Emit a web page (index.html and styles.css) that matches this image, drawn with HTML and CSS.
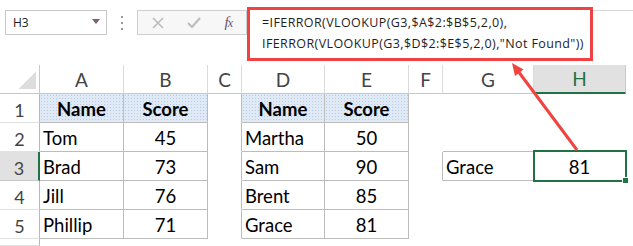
FILE: index.html
```html
<!DOCTYPE html>
<html lang="en">
<head>
    <meta charset="UTF-8">
    <title>IFERROR VLOOKUP</title>
    <link rel="stylesheet" href="styles.css">
</head>
<body>
    <div class="toolbar">
        <div class="namebox">
            <span>H3</span>
            <svg class="drop" width="8" height="5" viewBox="0 0 8 5"><polygon points="0,0 8,0 4,5" fill="#7d5f7a"/></svg>
        </div>
        <div class="grip">
            <svg width="3" height="14" viewBox="0 0 3 14"><rect x="0" y="0" width="2" height="2" fill="#9a9a9a"/><rect x="0" y="6" width="2" height="2" fill="#9a9a9a"/><rect x="0" y="12" width="2" height="2" fill="#9a9a9a"/></svg>
        </div>
        <div class="buttons">
            <svg width="12" height="12" viewBox="0 0 12 12"><path d="M1 1 L11 11 M11 1 L1 11" stroke="#bcbcbc" stroke-width="1.6" fill="none"/></svg>
            <svg width="14" height="11" viewBox="0 0 14 11"><path d="M1 6 L5 10 L13 1" stroke="#bcbcbc" stroke-width="2" fill="none"/></svg>
            <span class="fx">f<small>x</small></span>
        </div>
        <div class="formula-bar">
            <div class="formula">=IFERROR(VLOOKUP(G3,$A$2:$B$5,2,0),<br>IFERROR(VLOOKUP(G3,$D$2:$E$5,2,0),"Not Found"))</div>
            <div class="formula-rest"></div>
        </div>
    </div>

    <div class="sheet">
        <!-- column headers -->
        <div class="corner"></div>
        <div class="colhead">A</div>
        <div class="colhead">B</div>
        <div class="colhead">C</div>
        <div class="colhead">D</div>
        <div class="colhead">E</div>
        <div class="colhead">F</div>
        <div class="colhead">G</div>
        <div class="colhead selected">H</div>

        <!-- row 1 -->
        <div class="rowhead">1</div>
        <div class="cell t head">Name</div>
        <div class="cell t head">Score</div>
        <div class="cell edge"></div>
        <div class="cell t head">Name</div>
        <div class="cell t head">Score</div>
        <div class="cell"></div>
        <div class="cell"></div>
        <div class="cell"></div>

        <!-- row 2 -->
        <div class="rowhead">2</div>
        <div class="cell t">Tom</div>
        <div class="cell t num">45</div>
        <div class="cell edge"></div>
        <div class="cell t">Martha</div>
        <div class="cell t num">50</div>
        <div class="cell"></div>
        <div class="cell top"></div>
        <div class="cell top"></div>

        <!-- row 3 -->
        <div class="rowhead selected">3</div>
        <div class="cell t">Brad</div>
        <div class="cell t num">73</div>
        <div class="cell edge"></div>
        <div class="cell t">Sam</div>
        <div class="cell t num">90</div>
        <div class="cell edge"></div>
        <div class="cell t">Grace</div>
        <div class="cell t num active">81</div>

        <!-- row 4 -->
        <div class="rowhead">4</div>
        <div class="cell t">Jill</div>
        <div class="cell t num">76</div>
        <div class="cell edge"></div>
        <div class="cell t">Brent</div>
        <div class="cell t num">85</div>
        <div class="cell"></div>
        <div class="cell"></div>
        <div class="cell"></div>

        <!-- row 5 -->
        <div class="rowhead">5</div>
        <div class="cell t">Phillip</div>
        <div class="cell t num">71</div>
        <div class="cell edge"></div>
        <div class="cell t">Grace</div>
        <div class="cell t num">81</div>
        <div class="cell"></div>
        <div class="cell"></div>
        <div class="cell"></div>

        <div class="rowhead"></div>
    </div>

    <svg class="arrow" width="633" height="246" viewBox="0 0 633 246">
        <line x1="577" y1="150" x2="518" y2="71" stroke="#f0443f" stroke-width="3"/>
        <polygon points="512,63 523.5,69.5 515,76" fill="#f0443f"/>
    </svg>
</body>
</html>
```

FILE: styles.css
```css
body {
    margin: 0;
    background: #fff;
    font-family: 'Lato', sans-serif;
    width: 633px;
    height: 246px;
    overflow: hidden;
    position: relative;
}

/* formula bar row */
.toolbar {
    display: flex;
    align-items: flex-start;
    height: 65px;
    padding: 7px 0 0 5px;
    box-sizing: border-box;
}

.namebox {
    margin-top: 3px;
    width: 102px;
    height: 25px;
    box-sizing: border-box;
    border: 1px solid #c8c8c8;
    display: flex;
    align-items: center;
    justify-content: space-between;
    padding: 0 6px 1px 7px;
    font-family: 'Open Sans', sans-serif;
    font-size: 12px;
    color: #222;
}

.drop {
    margin-top: -2px;
}

.grip {
    width: 30px;
    height: 31px;
    display: flex;
    align-items: center;
    justify-content: center;
}

.buttons {
    margin-top: 3px;
    width: 110px;
    height: 25px;
    box-sizing: border-box;
    border: 1px solid #cfcfcf;
    background: #f7f7f7;
    display: flex;
    align-items: center;
    padding: 0 14px 0 14px;
    justify-content: space-between;
}

.fx {
    font-family: 'Liberation Serif', serif;
    font-style: italic;
    font-size: 15px;
    color: #6f4f6d;
    letter-spacing: -1px;
}

.fx small {
    font-size: 12px;
}

.formula-bar {
    flex: 1;
    display: flex;
    align-items: flex-start;
}

.formula {
    width: 346px;
    height: 54px;
    box-sizing: border-box;
    border: 3px solid #ef4242;
    padding: 2px 0 0 12px;
    font-family: 'Open Sans', sans-serif;
    font-size: 12.5px;
    letter-spacing: 0.4px;
    line-height: 21px;
    color: #1e1e1e;
    white-space: nowrap;
}

.formula-rest {
    flex: 1;
    margin-top: 3px;
    height: 46px;
    border-top: 1px solid #d6d6d6;
}

/* grid */
.sheet {
    display: grid;
    grid-template-columns: 40px 84px 84px 34px 83px 84px 34px 91px 92px;
    grid-template-rows: repeat(6, 29px) 7px;
}

.sheet > div {
    box-sizing: border-box;
    border-right: 1px solid transparent;
    border-bottom: 1px solid transparent;
}

.corner {
    border-right-color: #c8c8c8 !important;
    border-bottom-color: #c8c8c8 !important;
    background: linear-gradient(to bottom right, transparent 50%, #dddddd 50%) no-repeat right 3px bottom 4px / 18px 18px;
}

.colhead {
    display: flex;
    align-items: center;
    justify-content: center;
    font-size: 19px;
    color: #444;
    border-right-color: #dadada !important;
    border-bottom-color: #c8c8c8 !important;
}

.colhead.selected {
    background: #e1e1e1;
    color: #217346;
    border-bottom: 2px solid #217346 !important;
    border-right-color: #c8c8c8 !important;
}

.rowhead {
    display: flex;
    align-items: center;
    justify-content: center;
    padding-top: 3px;
    font-size: 18px;
    color: #444;
    border-right-color: #b8b8b8 !important;
    border-bottom-color: #e2e2e2 !important;
}

.rowhead.selected {
    background: #e1e1e1;
    border-right: 2px solid #217346 !important;
    border-bottom-color: #c8c8c8 !important;
}

.cell {
    display: flex;
    align-items: flex-end;
    padding: 0 0 1px 3px;
    font-size: 18.5px;
    line-height: 23px;
    color: #000;
}

.cell.t {
    border-right-color: #bcbcbc;
    border-bottom-color: #bcbcbc;
}

.cell.edge {
    border-right-color: #bcbcbc;
}

.cell.top {
    border-bottom-color: #bcbcbc;
}

.cell.head {
    justify-content: center;
    padding-left: 0;
    font-weight: bold;
    background-color: #dfeaf6;
    background-image: radial-gradient(#b7cbe3 0.7px, transparent 0.9px);
    background-size: 3px 3px;
}

.cell.num {
    justify-content: center;
    padding-left: 0;
}

.cell.active {
    position: relative;
}

.cell.active::after {
    content: "";
    position: absolute;
    top: -2px;
    left: -1px;
    right: -2px;
    bottom: -2px;
    border: 2px solid #217346;
}

.cell.active::before {
    content: "";
    position: absolute;
    right: -3px;
    bottom: -3px;
    width: 5px;
    height: 5px;
    background: #217346;
    border-left: 1px solid #fff;
    border-top: 1px solid #fff;
    z-index: 1;
}

.arrow {
    position: absolute;
    top: 0;
    left: 0;
}
```
